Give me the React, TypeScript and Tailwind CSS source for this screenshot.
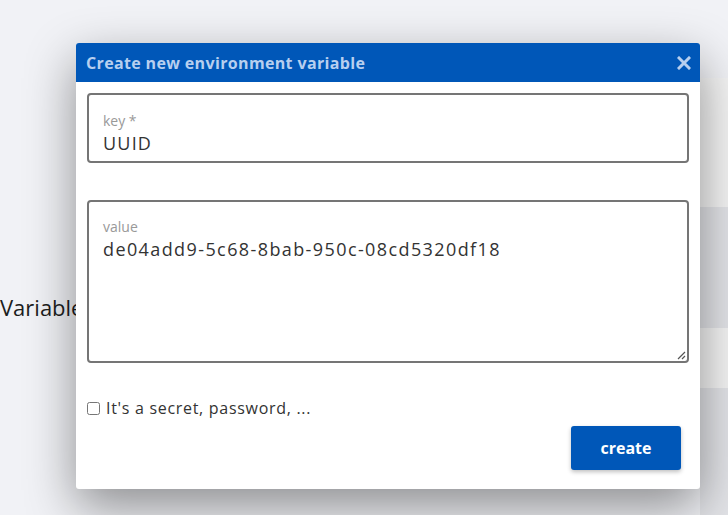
import { useState } from "react";

const font = { fontFamily: '"Open Sans", "Liberation Sans", sans-serif' };

export default function App() {
  const [key, setKey] = useState("UUID");
  const [value, setValue] = useState("de04add9-5c68-8bab-950c-08cd5320df18");
  const [secret, setSecret] = useState(false);

  return (
    <div
      className="relative h-[515px] w-full overflow-hidden bg-[#f1f2f6] text-[#333]"
      style={font}
    >
      {/* page behind the dialog */}
      <div className="flex h-full pt-[78px]">
        <div className="flex w-[700px] shrink-0 flex-col">
          <div className="h-[214px]" />
          <div className="text-[22px] leading-[30px] text-[#1d1d1d] whitespace-nowrap">
            Variables
          </div>
        </div>
        <div className="flex flex-1 flex-col">
          <div className="h-[129px] bg-[#f4f4f4]" />
          <div className="h-[121px] bg-[#e3e4e8]" />
          <div className="h-[60px] bg-[#f4f4f4]" />
          <div className="flex-1 bg-[#e3e4e8]" />
        </div>
      </div>

      {/* dialog */}
      <div className="absolute left-[76px] top-[43px] w-[624px] rounded-[3px] bg-white shadow-[0_18px_50px_rgba(0,0,0,0.42)]">
        <div className="flex h-[39px] items-center justify-between rounded-t-[3px] bg-[#0057b8] pl-[10px] pr-[9px]">
          <h2 className="text-[16px] font-bold tracking-[0.35px] text-[#b7cfef]">
            Create new environment variable
          </h2>
          <button type="button" className="text-[#b7cfef]">
            <svg width="14" height="14" viewBox="0 0 14 14">
              <path
                d="M2 2 L12 12 M12 2 L2 12"
                stroke="currentColor"
                strokeWidth="3"
                strokeLinecap="square"
              />
            </svg>
          </button>
        </div>

        <div className="px-[11px] pt-[11px] pb-[19px]">
          <label className="block h-[70px] rounded-[4px] border-2 border-[#757575] px-[14px] pt-[17px]">
            <span className="block text-[14px] leading-[18px] text-[#999]">key *</span>
            <input
              value={key}
              onChange={(e) => setKey(e.target.value)}
              className="block w-full text-[18px] leading-[26px] tracking-[1.2px] text-[#333] outline-none"
            />
          </label>

          <label className="relative mt-[37px] block h-[163px] rounded-[4px] border-2 border-[#757575] px-[14px] pt-[16px]">
            <span className="block text-[14px] leading-[18px] text-[#999]">value</span>
            <textarea
              value={value}
              onChange={(e) => setValue(e.target.value)}
              className="block h-[118px] w-full resize-none text-[18px] leading-[26px] tracking-[1.4px] text-[#333] outline-none"
            />
            {/* resize grip */}
            <svg
              className="absolute bottom-[1px] right-[1px]"
              width="10"
              height="10"
              viewBox="0 0 10 10"
            >
              <path d="M9 2 L2 9 M9 6 L6 9" stroke="#555" strokeWidth="1.2" />
            </svg>
          </label>

          <label className="mt-[33px] flex items-center gap-[6px] text-[16px] tracking-[0.7px] text-[#333]">
            <input
              type="checkbox"
              checked={secret}
              onChange={(e) => setSecret(e.target.checked)}
              className="m-0 h-[13px] w-[13px]"
            />
            It's a secret, password, ...
          </label>

          <div className="mt-[6px] flex justify-end pr-[8px]">
            <button
              type="button"
              className="h-[44px] w-[110px] rounded-[3px] bg-[#0057b8] text-[16px] font-bold text-white shadow-[0_2px_4px_rgba(0,0,0,0.25)]"
            >
              create
            </button>
          </div>
        </div>
      </div>
    </div>
  );
}
